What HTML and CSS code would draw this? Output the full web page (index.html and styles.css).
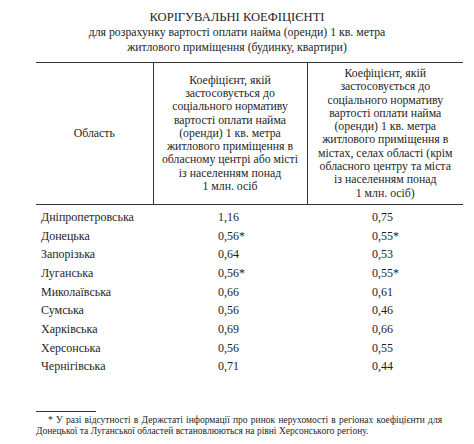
FILE: index.html
```html
<!DOCTYPE html>
<html lang="uk">
<head>
<meta charset="utf-8">
<link rel="stylesheet" href="styles.css">
</head>
<body>
<div class="page">
  <div class="title">
    <div class="title-main">КОРІГУВАЛЬНІ КОЕФІЦІЄНТІ</div>
    <div>для розрахунку вартості оплати найма (оренди) 1 кв. метра</div>
    <div>житлового приміщення (будинку, квартири)</div>
  </div>
  <table class="coef">
    <colgroup>
      <col class="c1"><col class="c2"><col class="c3">
    </colgroup>
    <thead>
      <tr>
        <th class="h1">Область</th>
        <th class="h2">Коефіцієнт, якій<br>застосовується до<br>соціального нормативу<br>вартості оплати найма<br>(оренди) 1 кв. метра<br>житлового приміщення в<br>обласному центрі або місті<br>із населенням понад<br>1 млн. осіб</th>
        <th class="h3">Коефіцієнт, якій<br>застосовується до<br>соціального нормативу<br>вартості оплати найма<br>(оренди) 1 кв. метра<br>житлового приміщення в<br>містах, селах області (крім<br>обласного центру та міста<br>із населенням понад<br>1 млн. осіб)</th>
      </tr>
    </thead>
    <tbody>
      <tr class="first"><td>Дніпропетровська</td><td>1,16</td><td>0,75</td></tr>
      <tr><td>Донецька</td><td>0,56*</td><td>0,55*</td></tr>
      <tr><td>Запорізька</td><td>0,64</td><td>0,53</td></tr>
      <tr><td>Луганська</td><td>0,56*</td><td>0,55*</td></tr>
      <tr><td>Миколаївська</td><td>0,66</td><td>0,61</td></tr>
      <tr><td>Сумська</td><td>0,56</td><td>0,46</td></tr>
      <tr><td>Харківська</td><td>0,69</td><td>0,66</td></tr>
      <tr><td>Херсонська</td><td>0,56</td><td>0,55</td></tr>
      <tr><td>Чернігівська</td><td>0,71</td><td>0,44</td></tr>
    </tbody>
  </table>
  <div class="rule"></div>
  <p class="note">* У разі відсутності в Держстаті інформації про ринок нерухомості в регіонах коефіцієнти для Донецької та Луганської областей встановлюються на рівні Херсонського регіону.</p>
</div>
</body>
</html>
```

FILE: styles.css
```css
html, body {
  margin: 0;
  padding: 0;
  background: #fff;
}
.page {
  width: 474px;
  height: 444px;
  overflow: hidden;
  font-family: "Liberation Serif", "Times New Roman", serif;
  color: #1e1e1e;
}
.title {
  padding-top: 10px;
  text-align: center;
  font-size: 11.8px;
  line-height: 15px;
}
.title-main {
  font-size: 12.6px;
}
.coef {
  margin: 7px 0 0 36px;
  width: 427px;
  table-layout: fixed;
  border-collapse: collapse;
  font-size: 11.8px;
}
.c1 { width: 117px; }
.c2 { width: 154px; }
.c3 { width: 156px; }
.coef thead tr {
  border-top: 1px solid #333;
  border-bottom: 1px solid #333;
}
.coef th {
  font-weight: normal;
  text-align: center;
  vertical-align: middle;
  line-height: 13.3px;
  padding: 4px 0;
}
.coef th.h2 {
  border-left: 1px solid #333;
  border-right: 1px solid #333;
}
.coef td {
  font-size: 12px;
  height: 18.65px;
  padding: 0;
  line-height: 18.65px;
}
.coef td:first-child { padding-left: 5px; }
.coef td + td { padding-left: 65px; }
.coef tr.first td { padding-top: 3px; }
.rule {
  margin: 35px 0 0 36px;
  width: 60px;
  border-top: 1px solid #333;
}
.note {
  margin: 3px 0 0 36px;
  width: 406px;
  font-size: 9.5px;
  line-height: 11.5px;
  text-align: justify;
  text-indent: 12px;
}
```
